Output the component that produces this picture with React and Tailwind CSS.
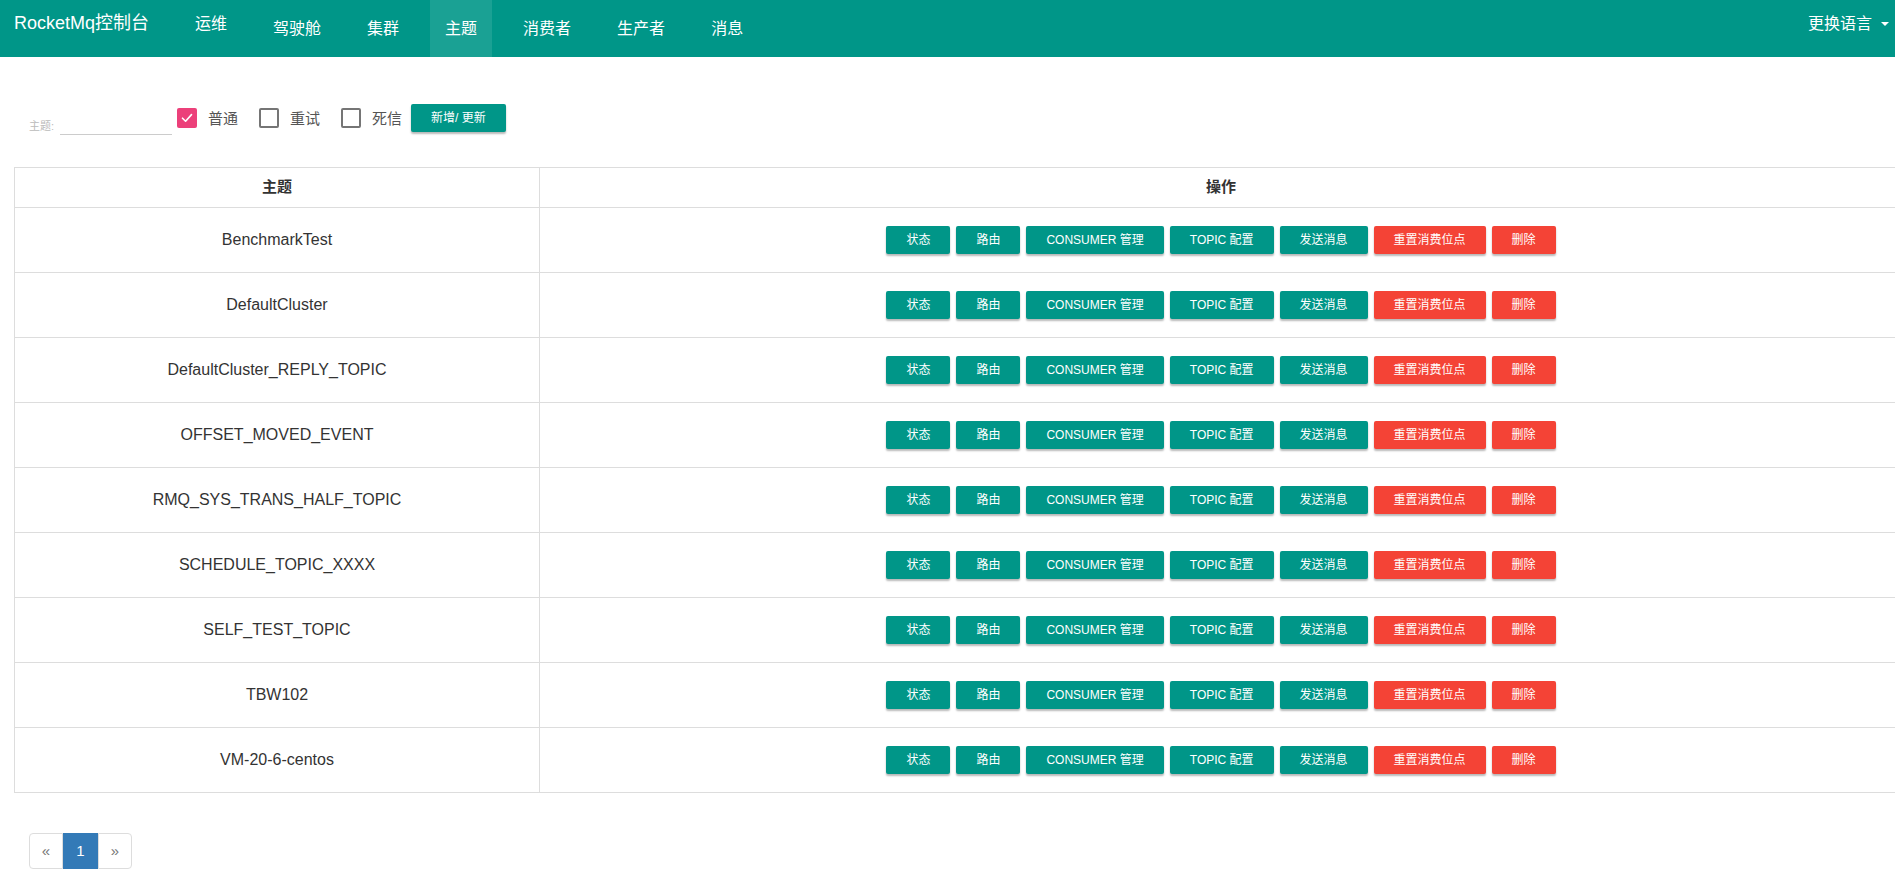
import React from "react";

const topics = [
  "BenchmarkTest",
  "DefaultCluster",
  "DefaultCluster_REPLY_TOPIC",
  "OFFSET_MOVED_EVENT",
  "RMQ_SYS_TRANS_HALF_TOPIC",
  "SCHEDULE_TOPIC_XXXX",
  "SELF_TEST_TOPIC",
  "TBW102",
  "VM-20-6-centos",
];

const navItems = ["运维", "驾驶舱", "集群", "主题", "消费者", "生产者", "消息"];

function Btn({ children, red }) {
  return (
    <button
      className={
        "h-[28px] px-[20px] text-[12px] leading-none text-white rounded-[2px] shadow-[0_2px_2px_rgba(0,0,0,0.28)] whitespace-nowrap " +
        (red ? "bg-[#f44336]" : "bg-[#009688]")
      }
    >
      {children}
    </button>
  );
}

function Check({ checked, label }) {
  return (
    <div className="flex items-center">
      {checked ? (
        <span className="w-[20px] h-[20px] rounded-[2px] bg-[#ec407a] flex items-center justify-center">
          <svg width="14" height="14" viewBox="0 0 14 14" fill="none">
            <path d="M2.5 7.2 L5.6 10.2 L11.5 3.6" stroke="white" strokeWidth="1.6" strokeLinecap="round" strokeLinejoin="round" />
          </svg>
        </span>
      ) : (
        <span className="w-[20px] h-[20px] rounded-[2px] border-2 border-[#757575] box-border" />
      )}
      <span className="ml-[11px] text-[15px] text-[#555] leading-none">{label}</span>
    </div>
  );
}

export default function App() {
  return (
    <div className="w-full min-h-screen overflow-hidden bg-white font-['Liberation_Sans','Noto_Sans_CJK_SC',sans-serif] text-[#333]">
      {/* Navbar */}
      <div className="h-[57px] bg-[#009688] flex items-stretch text-white">
        <div className="pl-[14px] flex items-center pb-[10px] text-[18px] whitespace-nowrap">RocketMq控制台</div>
        <ul className="flex items-stretch ml-[31px] gap-[16px]">
          {navItems.map((n, i) => (
            <li
              key={n}
              className={
                "px-[15px] flex items-center text-[16px] whitespace-nowrap " +
                (i === 0 ? "pb-[10px] " : "pt-[1px] ") +
                (n === "主题" ? "bg-white/10" : "")
              }
            >
              {n}
            </li>
          ))}
        </ul>
        <div className="ml-auto pr-[6px] flex items-center pb-[10px] text-[16px] whitespace-nowrap">
          更换语言
          <span className="ml-[9px] w-0 h-0 border-t-[4px] border-t-white border-x-[4px] border-x-transparent" />
        </div>
      </div>

      {/* Filter row */}
      <div className="mt-[47px] h-[28px] flex items-center">
        <div className="self-end mb-[-3px] ml-[29px] flex items-end">
          <span className="text-[11px] text-[#bbb] leading-none mb-[3px]">主题:</span>
          <div className="ml-[6px] w-[112px] h-[20px] border-b border-[#ccc]" />
        </div>
        <div className="ml-[5px] flex items-center gap-[21px]">
          <Check checked label="普通" />
          <Check label="重试" />
          <Check label="死信" />
        </div>
        <div className="ml-[9px]">
          <Btn>新增/ 更新</Btn>
        </div>
      </div>

      {/* Table */}
      <div className="mt-[35px] ml-[14px] w-[1889px]">
        <table className="w-[1889px] border-collapse table-fixed">
          <colgroup>
            <col className="w-[525px]" />
            <col />
          </colgroup>
          <thead>
            <tr className="h-[40px]">
              <th className="border border-[#ddd] text-[15px] font-bold text-center">主题</th>
              <th className="border border-[#ddd] text-[15px] font-bold text-center">操作</th>
            </tr>
          </thead>
          <tbody>
            {topics.map((t) => (
              <tr key={t} className="h-[65px]">
                <td className="border border-[#ddd] text-[16px] text-center text-[#333]">{t}</td>
                <td className="border border-[#ddd]">
                  <div className="flex justify-center gap-[6px]">
                    <Btn>状态</Btn>
                    <Btn>路由</Btn>
                    <Btn>CONSUMER 管理</Btn>
                    <Btn>TOPIC 配置</Btn>
                    <Btn>发送消息</Btn>
                    <Btn red>重置消费位点</Btn>
                    <Btn red>删除</Btn>
                  </div>
                </td>
              </tr>
            ))}
          </tbody>
        </table>
      </div>

      {/* Pagination */}
      <div className="mt-[40px] ml-[29px] flex">
        <span className="w-[34px] h-[36px] flex items-center justify-center border border-[#ddd] rounded-l-[4px] text-[15px] text-[#777]">«</span>
        <span className="w-[35px] h-[36px] flex items-center justify-center border border-[#337ab7] bg-[#337ab7] text-[15px] text-white">1</span>
        <span className="w-[34px] h-[36px] flex items-center justify-center border border-[#ddd] rounded-r-[4px] text-[15px] text-[#777]">»</span>
      </div>
    </div>
  );
}
